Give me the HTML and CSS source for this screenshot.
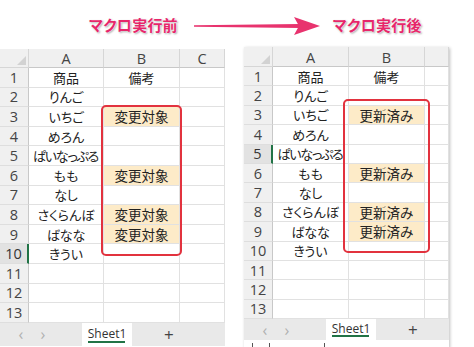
FILE: index.html
```html
<!DOCTYPE html>
<html lang="ja">
<head>
<meta charset="utf-8">
<link rel="stylesheet" href="styles.css">
</head>
<body>
<div class="page">
  <div class="titles">
    <span class="title">マクロ実行前</span>
    <svg class="arrow" width="126" height="20" viewBox="0 0 126 20">
      <path d="M0 9.2 L106 8 L106 12 L0 10.8 Z" fill="#e8336e"/>
      <path d="M100 1 L126 10 L100 19 L105 10 Z" fill="#e8336e"/>
    </svg>
    <span class="title">マクロ実行後</span>
  </div>
  <div class="sheets">
    <div class="sheet before">
      <div class="grid">
        <div class="corner"></div><div class="ch">A</div><div class="ch">B</div><div class="ch">C</div>
        <div class="rh">1</div><div class="c">商品</div><div class="c">備考</div><div class="c"></div>
        <div class="rh">2</div><div class="c">りんご</div><div class="c"></div><div class="c"></div>
        <div class="rh">3</div><div class="c">いちご</div><div class="c b hl">変更対象</div><div class="c"></div>
        <div class="rh">4</div><div class="c">めろん</div><div class="c"></div><div class="c"></div>
        <div class="rh">5</div><div class="c tight">ぱいなっぷる</div><div class="c"></div><div class="c"></div>
        <div class="rh">6</div><div class="c">もも</div><div class="c b hl">変更対象</div><div class="c"></div>
        <div class="rh">7</div><div class="c">なし</div><div class="c"></div><div class="c"></div>
        <div class="rh">8</div><div class="c">さくらんぼ</div><div class="c b hl">変更対象</div><div class="c"></div>
        <div class="rh">9</div><div class="c">ばなな</div><div class="c b hl">変更対象</div><div class="c"></div>
        <div class="rh active">10</div><div class="c">きうい</div><div class="c"></div><div class="c"></div>
        <div class="rh">11</div><div class="c"></div><div class="c"></div><div class="c"></div>
        <div class="rh">12</div><div class="c"></div><div class="c"></div><div class="c"></div>
        <div class="rh">13</div><div class="c"></div><div class="c"></div><div class="c"></div>
      </div>
      <div class="tabs">
        <span class="nav">&lsaquo;</span><span class="nav">&rsaquo;</span>
        <span class="tab">Sheet1</span>
        <span class="plus">+</span>
      </div>
      <div class="mark"></div>
    </div>
    <div class="sheet after">
      <div class="grid">
        <div class="corner"></div><div class="ch">A</div><div class="ch">B</div><div class="ch"></div>
        <div class="rh">1</div><div class="c">商品</div><div class="c">備考</div><div class="c"></div>
        <div class="rh">2</div><div class="c">りんご</div><div class="c"></div><div class="c"></div>
        <div class="rh">3</div><div class="c">いちご</div><div class="c b hl">更新済み</div><div class="c"></div>
        <div class="rh">4</div><div class="c">めろん</div><div class="c"></div><div class="c"></div>
        <div class="rh active">5</div><div class="c tight">ぱいなっぷる</div><div class="c"></div><div class="c"></div>
        <div class="rh">6</div><div class="c">もも</div><div class="c b hl">更新済み</div><div class="c"></div>
        <div class="rh">7</div><div class="c">なし</div><div class="c"></div><div class="c"></div>
        <div class="rh">8</div><div class="c">さくらんぼ</div><div class="c b hl">更新済み</div><div class="c"></div>
        <div class="rh">9</div><div class="c">ばなな</div><div class="c b hl">更新済み</div><div class="c"></div>
        <div class="rh">10</div><div class="c">きうい</div><div class="c"></div><div class="c"></div>
        <div class="rh">11</div><div class="c"></div><div class="c"></div><div class="c"></div>
        <div class="rh">12</div><div class="c"></div><div class="c"></div><div class="c"></div>
        <div class="rh">13</div><div class="c"></div><div class="c"></div><div class="c"></div>
      </div>
      <div class="tabs">
        <span class="nav">&lsaquo;</span><span class="nav">&rsaquo;</span>
        <span class="tab">Sheet1</span>
        <span class="plus">+</span>
      </div>
      <div class="below"><i></i><i></i><i></i></div>
      <div class="mark"></div>
    </div>
  </div>
</div>
</body>
</html>
```

FILE: styles.css
```css
html, body {
  margin: 0;
  padding: 0;
  background: #ffffff;
}
body {
  width: 474px;
  height: 347px;
  overflow: hidden;
  font-family: "Noto Sans CJK JP", "Noto Sans", sans-serif;
  color: #222;
}
.page {
  display: flex;
  flex-direction: column;
}
.titles {
  display: flex;
  align-items: center;
  height: 47px;
  padding-left: 89px;
  box-sizing: border-box;
}
.title {
  font-size: 15px;
  font-weight: bold;
  color: #e6276a;
  font-feature-settings: "palt";
  letter-spacing: 0.2px;
  text-shadow: 0 0 1px #fff, 0 0 2px #fff, 1px 1px 2px rgba(0,0,0,0.4);
  line-height: 20px;
  margin-top: 2px;
}
.arrow {
  margin-left: 16px;
  margin-right: 13px;
  margin-top: 5px;
}
.sheets {
  display: flex;
  align-items: flex-start;
  gap: 19px;
}
.sheet {
  position: relative;
  display: flex;
  flex-direction: column;
}
.before {
  width: 225px;
  margin-top: 2px;
  --rowh: 19.6px;
  --headh: 19px;
}
.after {
  width: 205px;
  --rowh: 19.4px;
  --headh: 20px;
  box-shadow: 1px 1px 3px rgba(0,0,0,0.25);
}
.grid {
  display: grid;
  grid-template-rows: var(--headh) repeat(13, var(--rowh));
}
.before .grid {
  grid-template-columns: 29px 75px 76px 45px;
}
.after .grid {
  grid-template-columns: 29px 76px 76px 24px;
}
.grid > div {
  box-sizing: border-box;
  display: flex;
  align-items: center;
  justify-content: center;
  white-space: nowrap;
  overflow: hidden;
}
.corner {
  background: #f0f0f0;
  border-right: 1px solid #d6d6d6;
  border-bottom: 1px solid #d6d6d6;
  position: relative;
}
.corner::after {
  content: "";
  position: absolute;
  right: 2px;
  bottom: 2px;
  width: 0;
  height: 0;
  border-left: 9px solid transparent;
  border-bottom: 9px solid #d2d2d2;
}
.ch {
  background: #f0f0f0;
  border-right: 1px solid #d6d6d6;
  border-bottom: 1px solid #c8c8c8;
  font-family: "Open Sans", "Noto Sans", sans-serif;
  font-size: 14.5px;
  color: #444;
  padding-top: 1px;
}
.rh {
  background: #f0f0f0;
  border-right: 1px solid #c8c8c8;
  border-bottom: 1px solid #dedede;
  font-family: "Open Sans", "Noto Sans", sans-serif;
  font-size: 14.5px;
  color: #444;
}
.rh.active {
  background: #e2e2e2;
  border-right: 2px solid #217346;
  color: #333;
}
.c {
  border-right: 1px solid #e1e1e1;
  border-bottom: 1px solid #e1e1e1;
  font-size: 13px;
  color: #222;
  font-feature-settings: "palt";
}
.c.tight {
  letter-spacing: -1.2px;
  overflow: visible;
  padding-right: 1px;
}
.c.b {
  font-feature-settings: normal;
  font-size: 13.5px;
}
.c.hl {
  background: #fdebc8;
}
.tabs {
  display: flex;
  align-items: stretch;
  background: #e9e9e9;
  height: 23px;
  font-family: "Open Sans", "Noto Sans", sans-serif;
}
.after .tabs {
  height: 21px;
}
.nav {
  color: #b0b0b0;
  font-size: 16px;
  width: 22px;
  display: flex;
  align-items: center;
  justify-content: center;
}
.nav:first-child {
  margin-left: 10px;
}
.tab {
  margin-left: 28px;
  width: 50px;
  background: #fff;
  font-size: 12px;
  color: #333;
  display: flex;
  align-items: center;
  justify-content: center;
  position: relative;
  padding-bottom: 2px;
  box-sizing: border-box;
}
.tab::after {
  content: "";
  position: absolute;
  left: 6px;
  right: 7px;
  bottom: 3px;
  height: 2px;
  background: #217346;
}
.plus {
  margin-left: 32px;
  font-size: 17px;
  color: #444;
  display: flex;
  align-items: center;
}
.below {
  height: 8px;
  background: #fff;
  display: flex;
  align-items: flex-start;
}
.below i {
  display: block;
  width: 1px;
  height: 4px;
  background: #555;
  margin-top: 3px;
}
.below i:nth-child(1) { margin-left: 8px; }
.below i:nth-child(2) { margin-left: 16px; }
.below i:nth-child(3) { margin-left: 54px; }
.mark {
  position: absolute;
  border: 2px solid #e2323e;
  border-radius: 5px;
  box-sizing: border-box;
}
.before .mark {
  left: 101px;
  top: 56px;
  width: 81px;
  height: 151px;
}
.after .mark {
  left: 99px;
  top: 52px;
  width: 87px;
  height: 154px;
}
```
